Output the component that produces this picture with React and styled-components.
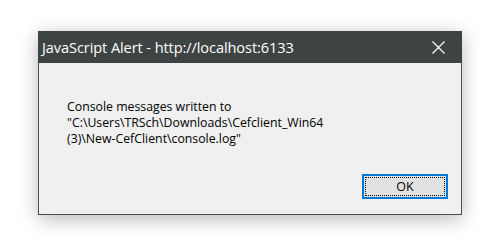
import React from "react";
import styled, { createGlobalStyle } from "styled-components";

const Global = createGlobalStyle`
  html, body { margin: 0; padding: 0; background: #ffffff; }
  body { width: 498px; height: 249px; overflow: hidden; font-family: "Open Sans", "Noto Sans", sans-serif; }
`;

const Stage = styled.div`
  padding: 31px 0 0 38px;
`;

const Window = styled.div`
  width: 424px;
  height: 184px;
  box-sizing: border-box;
  border: 1px solid #4a5050;
  border-top: none;
  background: #f0f0f0;
  display: flex;
  flex-direction: column;
  box-shadow: 0 4px 18px rgba(0, 0, 0, 0.28);
`;

const TitleBar = styled.div`
  height: 32px;
  margin: 0 -1px;
  background: #3e4444;
  display: flex;
  align-items: center;
  justify-content: space-between;
  padding: 0 0 0 4px;
  flex-shrink: 0;
`;

const Title = styled.span`
  color: #ffffff;
  font-family: "Open Sans", "Noto Sans", sans-serif;
  font-size: 14.6px;
  letter-spacing: -0.1px;
`;

const CloseBtn = styled.div`
  width: 46px;
  height: 32px;
  display: flex;
  align-items: center;
  justify-content: center;
  margin-right: 1px;
`;

const Body = styled.div`
  flex: 1;
  display: flex;
  flex-direction: column;
  justify-content: space-between;
  padding: 36px 13px 15px 28px;
`;

const Message = styled.div`
  font-family: "Open Sans", "Noto Sans", sans-serif;
  font-size: 12.3px;
  line-height: 16px;
  color: #000000;
`;

const ButtonRow = styled.div`
  display: flex;
  justify-content: flex-end;
`;

const OkButton = styled.div`
  width: 86px;
  height: 25px;
  box-sizing: border-box;
  border: 2px solid #0078d7;
  background: #e1e1e1;
  padding: 1px;
  display: flex;
`;

const Focus = styled.div`
  flex: 1;
  outline: 1px dotted #000;
  outline-offset: -1px;
  display: flex;
  align-items: center;
  justify-content: center;
  font-family: "Open Sans", "Noto Sans", sans-serif;
  font-size: 12.5px;
  color: #000;
`;

export default function App() {
  return (
    <>
      <Global />
      <Stage>
        <Window>
          <TitleBar>
            <Title>JavaScript Alert - http://localhost:6133</Title>
            <CloseBtn>
              <svg width="13" height="13" viewBox="0 0 13 13">
                <path d="M0.5 0.5 L12.5 12.5 M12.5 0.5 L0.5 12.5" stroke="#fff" strokeWidth="1.2" fill="none" />
              </svg>
            </CloseBtn>
          </TitleBar>
          <Body>
            <Message>
              Console messages written to
              <br />
              "C:\Users\TRSch\Downloads\Cefclient_Win64
              <br />
              (3)\New-CefClient\console.log"
            </Message>
            <ButtonRow>
              <OkButton>
                <Focus>OK</Focus>
              </OkButton>
            </ButtonRow>
          </Body>
        </Window>
      </Stage>
    </>
  );
}
